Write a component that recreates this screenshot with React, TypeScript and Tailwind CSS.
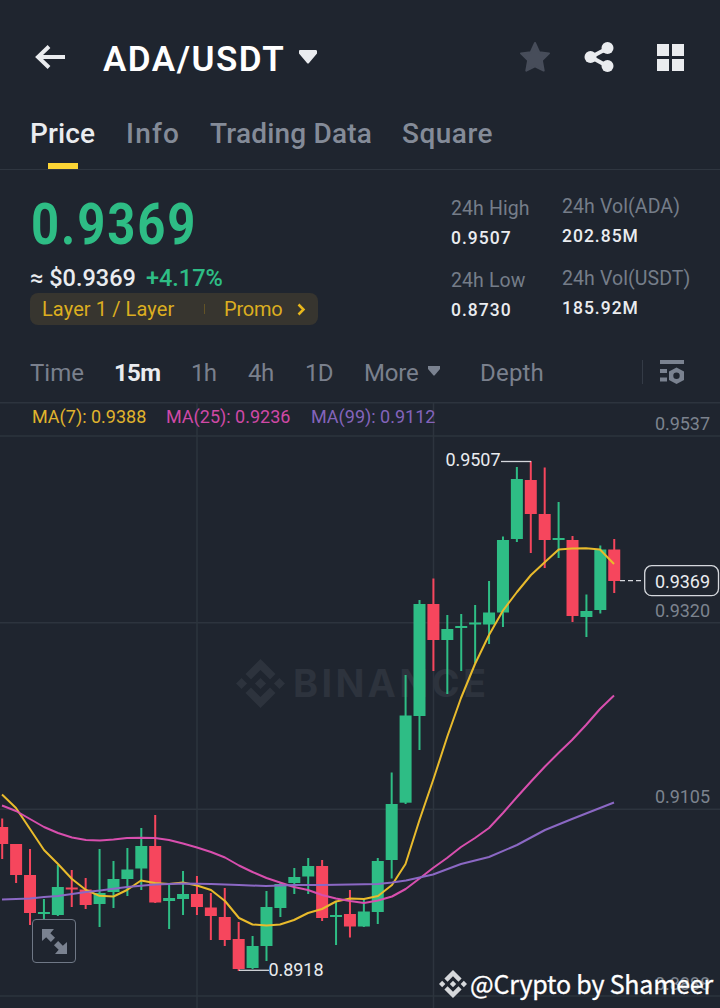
import React from 'react';

type Candle = {
  high: number;
  top: number;
  bottom: number;
  low: number;
  up: boolean;
};

const UP = '#2ebd85';
const DOWN = '#f6465d';
const STEP = 13.91;

// high, body top, body bottom, low, 1 = up
const rows: number[][] = [
  [818.5, 827, 844, 859, 0],
  [844, 844, 875, 883, 0],
  [849, 875, 913, 925, 0],
  [899, 912, 914, 922, 1],
  [865, 887, 915, 916, 1],
  [870, 887.5, 889.5, 907, 0],
  [878, 889.5, 905, 909, 0],
  [849, 893, 904, 927, 1],
  [861, 879, 892, 908, 1],
  [848, 869.5, 879, 896, 1],
  [828, 846, 868.5, 890, 1],
  [815, 846, 902.5, 903, 0],
  [885, 898, 901, 929, 1],
  [871, 894, 899, 915, 1],
  [876, 894, 907, 915, 0],
  [893, 907.5, 916, 940, 0],
  [888, 917, 940, 946, 0],
  [922, 939, 969, 971, 0],
  [936, 946, 968, 969, 1],
  [891, 907, 946, 961, 1],
  [883, 884, 908, 917, 1],
  [868, 877, 883, 894, 1],
  [858, 866, 876.5, 894, 1],
  [860, 866, 918, 921, 0],
  [902, 915, 917, 945, 1],
  [890, 914, 926.5, 937.5, 0],
  [899, 911.5, 926.5, 927, 1],
  [858, 861, 912, 924, 1],
  [772.5, 804, 860, 878.5, 1],
  [675, 715.5, 802.7, 804, 1],
  [600, 604, 716, 750, 1],
  [578.5, 604, 640, 671, 0],
  [615, 629, 640, 694, 1],
  [614, 626, 628, 671, 1],
  [605, 622.5, 624.5, 663, 1],
  [581, 612.5, 624.5, 644, 1],
  [536.5, 540, 612.5, 627, 1],
  [467, 479, 539, 542, 1],
  [461, 480, 514, 553, 0],
  [467.5, 514, 540, 568, 0],
  [502, 538, 540, 558, 1],
  [536, 540, 616, 622, 0],
  [594.5, 611, 617, 637, 1],
  [545.5, 549.5, 610, 613.5, 1],
  [539, 549.5, 581, 593, 0],
];

const candles: Candle[] = rows.map(([high, top, bottom, low, up]) => ({
  high,
  top,
  bottom,
  low,
  up: up === 1,
}));

const ma7 =
  '2,794.5 16,808 30,829 44,850 58,864 72,879 86,890 99.5,895.8 113.5,896.5 127,890 141,880.5 155,883 169,884 183,882.5 197,885.5 211,890 225,901 239,918 252.5,924.5 266.5,925.5 280,924.5 294,920 308,913 322,909 336,901.5 350,898.5 364,899 378,896 392,885 405.5,864 419.5,820 433.5,779 447.5,736 461,698 475,664 489,635 503,610.5 517,592 531,575 545,562 558.7,549.5 572,548.5 586,548.2 600,549.5 614,564';
const ma25 =
  '2,805.5 16,811 30,819 44,827 58,833 72,837.5 86,840 100,840.5 113.5,839.5 127,838 141,837.7 155,838 169,840 183,843.5 197,847.5 211,852 225,857.5 239,865.5 252.5,872 266.5,878 280,882.5 294,887 308,890 322,895 336,898.5 350,901 364,903 378,900.5 392,896.5 405.7,889 419.5,878.5 433,868 447,858 461,847 475,838 489,828 503,813 517,797 531,781.5 545,766.5 560,751.5 572,740 586,725 600,709 614,695.5';
const ma99 =
  '2,899.5 16,899 30,898.5 44,897 58,896 72,894 86,892 100,890.5 127,887 155,884.5 183,883.5 211,884 239,885 266,886 294,885 322,885 350,884.5 378,884 392,882.5 406,880.5 433,874.5 461,864 489,857 517,845 545,830 572,819 600,808 614,802.5';

const BinanceMark: React.FC<{ className?: string }> = ({ className }) => (
  <svg viewBox="0 0 126.6 126.6" className={className} fill="currentColor">
    <path d="M38.7 53.2 63.3 28.6 87.9 53.2 102.2 38.9 63.3 0 24.4 38.9z" />
    <path d="M0 63.3 14.3 49 28.6 63.3 14.3 77.6z" />
    <path d="M38.7 73.4 63.3 98 87.9 73.4 102.2 87.7 63.3 126.6 24.4 87.7z" />
    <path d="M98 63.3 112.3 49 126.6 63.3 112.3 77.6z" />
    <path d="M77.8 63.3 63.3 48.8 48.8 63.3 63.3 77.8z" />
  </svg>
);

const Header: React.FC = () => (
  <header className="flex h-[102px] items-center pt-3 pl-[35px] pr-9">
    <svg width="31" height="26" viewBox="0 0 31 26" fill="none" stroke="#eaecef" strokeWidth="4">
      <path d="M30 13H3M14 2.5 3 13l11 10.5" />
    </svg>
    <h1 className="ml-[37px] w-[181px] pt-[5px] text-[35px] leading-10 font-semibold tracking-[1.5px] whitespace-nowrap text-white">
      ADA/USDT
    </h1>
    <svg className="ml-[14px]" width="20" height="16" viewBox="0 0 20 16" fill="#eaecef">
      <path d="M2 1h16q1.500 0 1 2.500v1L11 14q-1 1-2 0L1 4.500V3Q.5 1 2 1z" />
    </svg>
    <div className="ml-auto flex items-center">
      <svg width="32" height="32" viewBox="0 0 32 32" fill="#474d5a" stroke="#474d5a" strokeWidth="2" strokeLinejoin="round">
        <path d="m16 2 4.200 9.200 9.800 1.200-7.100 7 1.800 10.200L16 25.300 7.300 29.600l1.800-10.200L2 12.400l9.800-1.200z" />
      </svg>
      <svg className="ml-[33px]" width="31" height="32" viewBox="0 0 31 32" fill="#eaecef">
        <path d="M24 7 7 16l17 9.500" fill="none" stroke="#eaecef" strokeWidth="4" />
        <circle cx="6.500" cy="16" r="6" />
        <circle cx="23.500" cy="7" r="6" />
        <circle cx="23.500" cy="25" r="6" />
      </svg>
      <div className="ml-[42px] grid grid-cols-2 gap-[3px]">
        <span className="size-3 bg-[#eaecef]" />
        <span className="size-3 bg-[#eaecef]" />
        <span className="size-3 bg-[#eaecef]" />
        <span className="size-3 bg-[#eaecef]" />
      </div>
    </div>
  </header>
);

const Tabs: React.FC = () => (
  <nav className="flex h-[68px] border-b border-[#2f3640] pl-[30px] text-[28px] leading-[64px] font-medium whitespace-nowrap text-[#848b98]">
    <div className="flex w-[96px] flex-col text-[#eaecef]">
      <span className="h-[61px] tracking-[0.1px]">Price</span>
      <span className="ml-[18px] h-1.5 w-[30px] bg-[#fcd535]" />
    </div>
    <span className="w-[84px] tracking-[1.2px]">Info</span>
    <span className="w-[192px] tracking-[0.2px]">Trading Data</span>
    <span className="tracking-[0.5px]">Square</span>
  </nav>
);

const Stat: React.FC<{ label: string; value: string }> = ({ label, value }) => (
  <div className="h-[72px] whitespace-nowrap">
    <div className="text-[19.5px] leading-7 tracking-[0.1px] text-[#757d89]">{label}</div>
    <div className="mt-px origin-left scale-x-[0.92] text-[19px] leading-7 font-medium tracking-[1.1px] text-[#eaecef]">
      {value}
    </div>
  </div>
);

const Summary: React.FC = () => (
  <section className="flex h-[172px]">
    <div className="w-[451px] pt-[26px] pl-[31px]">
      <div className="origin-left scale-x-[0.86] text-[57px] leading-[57px] font-bold tracking-[2.2px] text-[#2ebd85]">
        0.9369
      </div>
      <div className="mt-2.5 -ml-px flex gap-2.5 text-[23.5px] leading-[30px] font-medium whitespace-nowrap">
        <span className="text-[#eaecef]">≈ $0.9369</span>
        <span className="text-[#2ebd85]">+4.17%</span>
      </div>
      <div className="-ml-px flex h-8 w-72 items-center rounded-lg bg-[#37352f] pl-3 text-[20px] leading-8 whitespace-nowrap text-[#dcae20]">
        <span className="w-[162px] tracking-[0.1px]">Layer 1 / Layer</span>
        <span className="h-2.5 w-px bg-[#635326]" />
        <span className="ml-[19px] w-[73px] tracking-[-0.2px]">Promo</span>
        <svg width="9" height="13" viewBox="0 0 9 13" fill="none" stroke="#e8b71c" strokeWidth="2.500">
          <path d="m1.500 1.500 5 5-5 5" />
        </svg>
      </div>
    </div>
    <div className="w-[111px] pt-[25px]">
      <Stat label="24h High" value="0.9507" />
      <Stat label="24h Low" value="0.8730" />
    </div>
    <div className="pt-[23px]">
      <Stat label="24h Vol(ADA)" value="202.85M" />
      <Stat label="24h Vol(USDT)" value="185.92M" />
    </div>
  </section>
);

const Intervals: React.FC = () => (
  <div className="flex h-[60px] items-center pl-[30px] text-[24px] whitespace-nowrap text-[#7a808d]">
    <span className="w-[84px] pt-0.5">Time</span>
    <span className="w-[77px] pt-0.5 font-bold tracking-[-0.7px] text-[#eaecef]">15m</span>
    <span className="w-[57px] pt-0.5 tracking-[-0.7px]">1h</span>
    <span className="w-[57px] pt-0.5 tracking-[-0.5px]">4h</span>
    <span className="w-[59px] pt-0.5 tracking-[-0.7px]">1D</span>
    <span className="w-[63px] pt-0.5 tracking-[-0.2px]">More</span>
    <svg className="mb-0.5 w-[14px]" height="12" viewBox="0 0 14 12" fill="#7a8290">
      <path d="M1 1h12v3L7.500 10.500h-1L1 4z" />
    </svg>
    <span className="ml-[39px] w-[162px] pt-0.5 tracking-[0.2px]">Depth</span>
    <span className="h-6 w-px bg-[#343b46]" />
    <svg className="mb-px ml-[17px]" width="25" height="25" viewBox="0 0 25 25" fill="#7a8290">
      <path d="M0 1h24v4H0zM0 10h7v4H0zM0 18.500h7v4H0z" />
      <path fillRule="evenodd" d="m16.500 8.500 7.500 4v8.500l-7.500 4-7.500-4v-8.500zm0 5a3.200 3.200 0 1 0 0 6.400 3.200 3.200 0 0 0 0-6.400z" />
    </svg>
  </div>
);

const Chart: React.FC = () => (
  <section className="relative h-[606px]">
    <svg className="block" width="720" height="606" viewBox="0 402 720 606">
      <g stroke="#2d343e" strokeWidth="1.500">
        {[402.7, 436, 622.7, 809.3, 996].map((y) => (
          <line key={y} x1="0" x2="720" y1={y} y2={y} />
        ))}
        <line x1="197" x2="197" y1="402" y2="1008" />
        <line x1="433.500" x2="433.500" y1="402" y2="1008" />
      </g>

      {/* Watermark */}
      <g fill="#2d333d">
        <path transform="translate(236 659) scale(.387)" d="M38.7 53.2 63.3 28.6 87.9 53.2 102.2 38.9 63.3 0 24.4 38.9zM0 63.3 14.3 49 28.6 63.3 14.3 77.6zM38.7 73.4 63.3 98 87.9 73.4 102.2 87.7 63.3 126.6 24.4 87.7zM98 63.3 112.3 49 126.6 63.3 112.3 77.6zM77.8 63.3 63.3 48.8 48.8 63.3 63.3 77.8z" />
        <text x="293" y="697" fontSize="38" fontWeight="700" textLength="193" className="font-[Inter,sans-serif]">
          BINANCE
        </text>
      </g>

      {candles.map((c, i) => {
        const x = 2.2 + i * STEP;
        return (
          <g key={i} fill={c.up ? UP : DOWN}>
            <rect x={x - 1} y={c.high} width="2" height={c.low - c.high} />
            <rect x={x - 6} y={c.top} width="12" height={c.bottom - c.top} />
          </g>
        );
      })}

      <g fill="none" strokeWidth="2" strokeLinejoin="round">
        <polyline points={ma7} stroke="#e9bb2c" />
        <polyline points={ma25} stroke="#d84fae" />
        <polyline points={ma99} stroke="#8b68c4" />
      </g>

      {/* High, low and last price */}
      <g stroke="#d5d8dd" strokeWidth="1.300">
        <line x1="501" x2="531" y1="461.500" y2="461.500" />
        <line x1="239" x2="269" y1="970.300" y2="970.300" />
        <line x1="620" x2="641" y1="580.700" y2="580.700" strokeDasharray="5 3" />
        <rect x="644.700" y="565.700" width="73.800" height="30" rx="7" fill="#1f252f" />
      </g>
      <g fontSize="18" fill="#eaecef">
        <text x="445.500" y="466" textLength="55">0.9507</text>
        <text x="268.500" y="976" textLength="55">0.8918</text>
        <text x="655" y="588" textLength="55">0.9369</text>
      </g>
      <g fontSize="18" fill="#7c838e">
        <text x="655" y="430" textLength="55">0.9537</text>
        <text x="655" y="617" textLength="55">0.9320</text>
        <text x="655" y="803" textLength="55">0.9105</text>
        <text x="655" y="990" textLength="55">0.8888</text>
      </g>
    </svg>

    <div className="absolute top-[3px] left-8 flex text-[18px] leading-6 whitespace-nowrap">
      <span className="w-[134px] text-[#e0b42d]">MA(7): 0.9388</span>
      <span className="w-[145px] text-[#cf49a6]">MA(25): 0.9236</span>
      <span className="text-[#8464bb]">MA(99): 0.9112</span>
    </div>

    <button className="absolute top-[517px] left-8 flex size-11 items-center justify-center rounded border border-[#6f7886] bg-[#1f252f]">
      <svg width="25" height="25" viewBox="0 0 24 24" fill="#7a8290">
        <path d="M0 0h11.500L8 4l4.500 4.500-4 4L4 8l-4 3.500zM24 24H12.500l3.500-4-4.500-4.500 4-4L20 16l4-3.500z" />
      </svg>
    </button>

    <div className="absolute top-[564px] left-[439px] flex items-center text-white">
      <BinanceMark className="size-[28px] text-[#d6d8db]" />
      <span className="-mt-px ml-[3px] font-['Noto_Sans_CJK_SC',sans-serif] text-[25px] leading-9 tracking-[-0.2px] whitespace-nowrap [-webkit-text-stroke:0.3px_white]">
        @Crypto by Shameer
      </span>
    </div>
  </section>
);

const App: React.FC = () => {
  return (
    <main className="h-[1008px] w-[720px] overflow-hidden bg-[#1f252f] font-[Roboto,'Liberation_Sans',sans-serif]">
      <Header />
      <Tabs />
      <Summary />
      <Intervals />
      <Chart />
    </main>
  );
};

export default App;
